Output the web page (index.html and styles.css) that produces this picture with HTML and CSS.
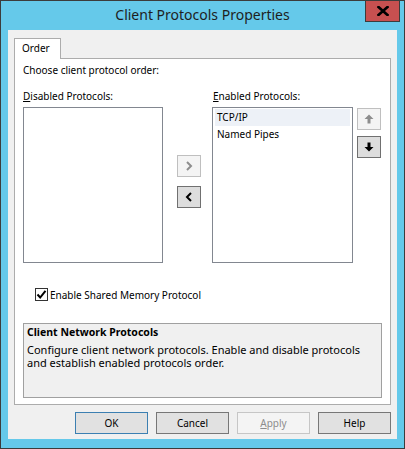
FILE: index.html
```html
<!DOCTYPE html>
<html>
<head>
<meta charset="utf-8">
<link rel="stylesheet" href="styles.css">
</head>
<body>
<div class="window">
  <div class="titlebar">
    <span class="title">Client Protocols Properties</span>
    <div class="close">
      <svg width="12" height="10" viewBox="0 0 12 10"><path d="M1.5 1 L10.5 9 M10.5 1 L1.5 9" stroke="#000" stroke-width="2.6" stroke-linecap="square"/></svg>
    </div>
  </div>
  <div class="client">
    <div class="tabs"><div class="tab">Order</div></div>
    <div class="panel">
      <div class="intro">Choose client protocol order:</div>
      <div class="lists">
        <div class="col">
          <div class="label"><u>D</u>isabled Protocols:</div>
          <div class="listbox"></div>
        </div>
        <div class="movebtns">
          <div class="sbtn disabled">
            <svg width="8" height="10" viewBox="0 0 8 10"><path d="M2 1 L6 5 L2 9" fill="none" stroke="#8d8d8d" stroke-width="2"/></svg>
          </div>
          <div class="sbtn">
            <svg width="8" height="10" viewBox="0 0 8 10"><path d="M6 1 L2 5 L6 9" fill="none" stroke="#000" stroke-width="2"/></svg>
          </div>
        </div>
        <div class="col col-en">
          <div class="label"><u>E</u>nabled Protocols:</div>
          <div class="listbox">
            <div class="item selected">TCP/IP</div>
            <div class="item">Named Pipes</div>
          </div>
        </div>
        <div class="orderbtns">
          <div class="sbtn disabled">
            <svg width="10" height="10" viewBox="0 0 10 10"><path d="M5 0.5 L9.5 5 L6.5 5 L6.5 9.5 L3.5 9.5 L3.5 5 L0.5 5 Z" fill="#8d8d8d"/></svg>
          </div>
          <div class="sbtn">
            <svg width="10" height="10" viewBox="0 0 10 10"><path d="M5 9.5 L9.5 5 L6.5 5 L6.5 0.5 L3.5 0.5 L3.5 5 L0.5 5 Z" fill="#000"/></svg>
          </div>
        </div>
      </div>
      <label class="check">
        <span class="box">
          <svg width="11" height="11" viewBox="0 0 11 11"><path d="M1.5 5.5 L4.2 8.5 L9.5 1.8" fill="none" stroke="#000" stroke-width="2"/></svg>
        </span>
        <span>Enable Shared Memory Protocol</span>
      </label>
      <div class="info">
        <div class="info-title">Client Network Protocols</div>
        <div class="info-text">Configure client network protocols. Enable and disable protocols and establish enabled protocols order.</div>
      </div>
    </div>
    <div class="buttons">
      <div class="btn default">OK</div>
      <div class="btn">Cancel</div>
      <div class="btn disabled"><u>A</u>pply</div>
      <div class="btn">Help</div>
    </div>
  </div>
</div>
</body>
</html>
```

FILE: styles.css
```css
html, body {
  margin: 0;
  padding: 0;
}
body {
  font-family: "Noto Sans", "Open Sans", sans-serif;
  font-size: 10px;
  color: #000;
}
.window {
  width: 405px;
  height: 449px;
  box-sizing: border-box;
  border: 1px solid #3c3c3c;
  background: #65c9ea;
  display: flex;
  flex-direction: column;
}
.titlebar {
  height: 29px;
  position: relative;
  display: flex;
  align-items: center;
  justify-content: center;
}
.title {
  font-size: 14px;
  color: #1e1e1e;
  margin-top: -2px;
}
.close {
  position: absolute;
  top: -1px;
  right: 4px;
  width: 35px;
  height: 22px;
  box-sizing: border-box;
  border: 1px solid #3c3c3c;
  background: #c75050;
  display: flex;
  align-items: center;
  justify-content: center;
}
.client {
  margin: 0 7px;
  height: 409px;
  background: #f0f0f0;
  box-sizing: border-box;
  padding: 8px 6px 0 6px;
  display: flex;
  flex-direction: column;
}
.tabs {
  display: flex;
  height: 20px;
  position: relative;
  z-index: 1;
}
.tab {
  width: 47px;
  height: 21px;
  box-sizing: border-box;
  border: 1px solid #acacac;
  border-bottom: none;
  background: #fff;
  padding-left: 7px;
  line-height: 18px;
}
.panel {
  width: 377px;
  height: 347px;
  box-sizing: border-box;
  border: 1px solid #acacac;
  background: #fff;
  padding: 3px 0 0 8px;
  display: flex;
  flex-direction: column;
}
.intro {
  line-height: 16px;
}
.lists {
  display: flex;
  align-items: flex-start;
  margin-top: 10px;
}
.col {
  display: flex;
  flex-direction: column;
  width: 140px;
}
.col-en {
  width: 141px;
}
.label {
  line-height: 16px;
  height: 16px;
  margin-bottom: 3px;
}
.col-en .label {
  padding-left: 1px;
}
.listbox {
  height: 156px;
  box-sizing: border-box;
  border: 1px solid #828790;
  background: #fff;
  padding: 1px 2px;
}
.item {
  height: 17px;
  line-height: 17px;
  padding-left: 2px;
}
.item.selected {
  background: #edf1f7;
}
.movebtns {
  display: flex;
  flex-direction: column;
  gap: 9px;
  margin-left: 14px;
  margin-right: 11px;
  padding-top: 67px;
}
.orderbtns {
  display: flex;
  flex-direction: column;
  gap: 6px;
  margin-left: 4px;
  padding-top: 20px;
}
.sbtn {
  width: 24px;
  height: 22px;
  box-sizing: border-box;
  border: 1px solid #707070;
  background: #dddddd;
  display: flex;
  align-items: center;
  justify-content: center;
}
.sbtn.disabled {
  border-color: #bfbfbf;
  background: #f4f4f4;
}
.check {
  display: flex;
  align-items: center;
  margin: 25px 0 0 12px;
  height: 13px;
}
.box {
  width: 13px;
  height: 13px;
  box-sizing: border-box;
  border: 1px solid #333;
  background: #fff;
  display: flex;
  align-items: center;
  justify-content: center;
  margin-right: 2px;
}
.info {
  margin-top: 22px;
  width: 359px;
  height: 75px;
  box-sizing: border-box;
  border: 1px solid #a0a0a0;
  background: #f0f0f0;
  padding: 1px 3px 0 3px;
}
.info-title {
  font-weight: bold;
  font-size: 10.5px;
  line-height: 15px;
}
.info-text {
  font-size: 11px;
  margin-top: 3px;
  line-height: 13px;
}
.buttons {
  display: flex;
  justify-content: flex-end;
  gap: 8px;
  margin-top: 7px;
  width: 377px;
}
.btn {
  width: 73px;
  height: 22px;
  box-sizing: border-box;
  border: 1px solid #777;
  background: #e1e1e1;
  display: flex;
  align-items: center;
  justify-content: center;
}
.btn.default {
  border-color: #3c7fb1;
}
.btn.disabled {
  border-color: #c6c6c6;
  background: #f4f4f4;
  color: #8d8d8d;
}
```
